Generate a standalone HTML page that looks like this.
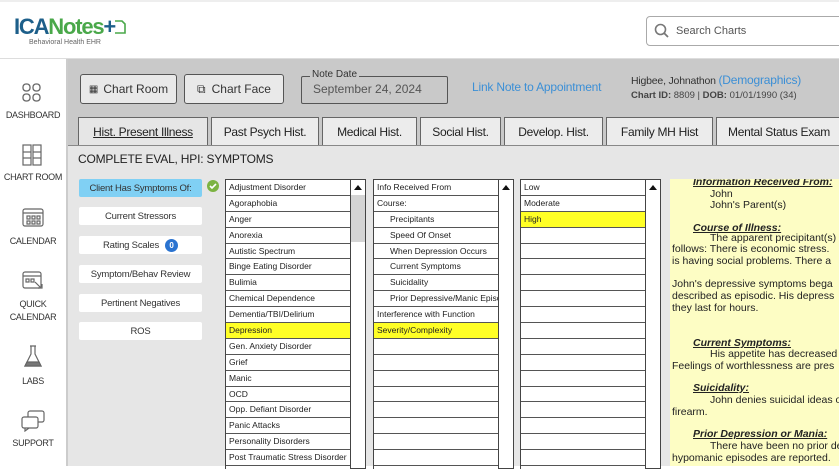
<!DOCTYPE html>
<html><head><style>
*{margin:0;padding:0;box-sizing:border-box}
body{width:839px;height:466px;overflow:hidden;position:relative;background:#fff;font-family:"Liberation Sans",sans-serif;color:#222}
.a{position:absolute}
.btn{position:absolute;border:1px solid #555;border-radius:3px;background:#e9e9e9;font-size:12px;color:#333;display:flex;align-items:center;justify-content:center}
.tab{position:absolute;top:117px;height:29px;border:1px solid #666;border-bottom:none;background:#ececec;font-size:12px;color:#222;display:flex;align-items:center;justify-content:center;white-space:nowrap;letter-spacing:-0.3px}
.lb{position:absolute;left:79px;width:123px;height:18px;background:#fff;border-radius:2px;font-size:9.5px;color:#333;display:flex;align-items:center;justify-content:center;letter-spacing:-0.2px}
.list{position:absolute;top:179px;background:#fff;border:1px solid #444;border-bottom:none;height:290px}
.list div{height:15.9px;border-bottom:1px solid #555;font-size:8.5px;padding-left:3px;line-height:15px;white-space:nowrap;overflow:hidden;color:#222}
.y{background:#ffff26}
.sb{position:absolute;top:179px;width:15px;height:290px;background:#fff;border:1px solid #444;border-left:none}
.sb:before{content:"";position:absolute;left:3px;top:5px;border-left:4px solid transparent;border-right:4px solid transparent;border-bottom:5px solid #111}
.t{position:absolute;font-size:10.5px;font-family:"Liberation Sans",sans-serif;color:#222;white-space:nowrap}
.h{font-style:italic;font-weight:bold;text-decoration:underline}
.side{position:absolute;left:0;width:66px;text-align:center;font-size:9px;color:#333;letter-spacing:-0.3px}
</style></head><body>
<div class="a" style="left:0;top:0;width:839px;height:2px;background:#eee"></div>
<div class="a" style="left:14px;top:14px;font-size:22px;font-weight:bold;letter-spacing:-1.2px;color:#1d5f8a">ICA<span style="color:#4aa84a">Notes</span><span style="color:#1d5f8a">+</span></div>
<svg class="a" style="left:113px;top:19px" width="14" height="16" fill="none" stroke="#4aa84a" stroke-width="1.6"><path d="M2 2 h7 l3 3 v9 h-10"/></svg>
<div class="a" style="left:29px;top:39px;font-size:7px;color:#666">Behavioral Health EHR</div>
<div class="a" style="left:646px;top:16px;width:200px;height:30px;border:1px solid #aaa;border-radius:4px"></div>
<svg class="a" style="left:654px;top:23px" width="16" height="16"><circle cx="6.5" cy="6.5" r="5" fill="none" stroke="#777" stroke-width="1.6"/><line x1="10" y1="10" x2="14" y2="14" stroke="#777" stroke-width="1.8"/></svg>
<div class="a" style="left:676px;top:25px;font-size:11px;color:#555">Search Charts</div>
<div class="a" style="left:0;top:58px;width:839px;height:1px;background:#ddd"></div>
<div class="a" style="left:66px;top:59px;width:2px;height:407px;background:#ccc"></div>
<svg class="a" style="left:22px;top:83px" width="20" height="20" fill="none" stroke="#666" stroke-width="1.3"><rect x="1" y="1" width="7" height="7" rx="3"/><rect x="11" y="1" width="7" height="7" rx="3"/><rect x="1" y="11" width="7" height="7" rx="3"/><rect x="11" y="11" width="7" height="7" rx="3"/></svg>
<div class="side" style="top:110px">DASHBOARD</div>
<svg class="a" style="left:22px;top:144px" width="20" height="22" fill="none" stroke="#666" stroke-width="1.2"><rect x="1" y="1" width="8" height="20"/><rect x="11" y="1" width="8" height="20"/><line x1="1" y1="8" x2="9" y2="8"/><line x1="1" y1="14" x2="9" y2="14"/><line x1="11" y1="8" x2="19" y2="8"/><line x1="11" y1="14" x2="19" y2="14"/></svg>
<div class="side" style="top:172px">CHART ROOM</div>
<svg class="a" style="left:22px;top:207px" width="22" height="20" fill="none" stroke="#666" stroke-width="1.2"><rect x="1" y="2" width="20" height="17" rx="2"/><line x1="1" y1="6" x2="21" y2="6"/><rect x="5" y="9" width="3" height="3"/><rect x="10" y="9" width="3" height="3"/><rect x="15" y="9" width="3" height="3"/><rect x="5" y="14" width="3" height="3"/><rect x="10" y="14" width="3" height="3"/><rect x="15" y="14" width="3" height="3"/></svg>
<div class="side" style="top:236px">CALENDAR</div>
<svg class="a" style="left:22px;top:270px" width="22" height="22" fill="none" stroke="#666" stroke-width="1.2"><rect x="1" y="2" width="18" height="16" rx="2"/><line x1="1" y1="6" x2="19" y2="6"/><rect x="4" y="9" width="3" height="3"/><rect x="9" y="9" width="3" height="3"/><path d="M13 12 l6 6 M16 18 h4 v-4"/></svg>
<div class="side" style="top:298px;line-height:13px">QUICK<br>CALENDAR</div>
<svg class="a" style="left:23px;top:345px" width="20" height="24" fill="none" stroke="#666" stroke-width="1.2"><path d="M7 1 h6 M8 1 v8 L2 21 h16 L12 9 V1"/><path d="M4 17 L16 17 L18 21 H2 Z" fill="#777"/></svg>
<div class="side" style="top:376px">LABS</div>
<svg class="a" style="left:20px;top:410px" width="26" height="22" fill="none" stroke="#666" stroke-width="1.2"><rect x="8" y="1" width="16" height="11" rx="2"/><rect x="2" y="7" width="16" height="11" rx="2" fill="#fff"/><path d="M5 18 v3 l4 -3"/></svg>
<div class="side" style="top:438px">SUPPORT</div>
<div class="a" style="left:68px;top:59px;width:771px;height:87px;background:#c9c9c9"></div>
<div class="btn" style="left:80px;top:74px;width:97px;height:30px"><span style="font-size:10px;margin-right:5px">▦</span>Chart Room</div>
<div class="btn" style="left:184px;top:74px;width:100px;height:30px"><span style="font-size:12px;margin-right:6px">⧉</span>Chart Face</div>
<div class="a" style="left:301px;top:76px;width:147px;height:28px;border:1px solid #555;border-radius:2px"></div>
<div class="a" style="left:310px;top:69px;font-size:10px;color:#333;background:#c9c9c9;padding:0 2px">Note Date</div>
<div class="a" style="left:313px;top:82px;font-size:12px;color:#555">September 24, 2024</div>
<div class="a" style="left:472px;top:80px;font-size:12px;color:#3b8fd6;letter-spacing:-0.2px">Link Note to Appointment</div>
<div class="a" style="left:631px;top:73px;font-size:10.5px;color:#333;letter-spacing:-0.2px">Higbee, Johnathon <span style="color:#3b8fd6;font-size:12px">(Demographics)</span></div>
<div class="a" style="left:631px;top:90px;font-size:9.5px;color:#444"><b>Chart ID:</b> 8809 | <b>DOB:</b> 01/01/1990 (34)</div>
<div class="tab" style="left:78px;width:130px;background:#e6e6e6"><u>Hist. Present Illness</u></div>
<div class="tab" style="left:211px;width:108px">Past Psych Hist.</div>
<div class="tab" style="left:322px;width:95px">Medical Hist.</div>
<div class="tab" style="left:420px;width:81px">Social Hist.</div>
<div class="tab" style="left:504px;width:99px">Develop. Hist.</div>
<div class="tab" style="left:606px;width:107px">Family MH Hist</div>
<div class="tab" style="left:716px;width:130px;justify-content:flex-start;padding-left:11px">Mental Status Exam</div>
<div class="a" style="left:68px;top:145px;width:771px;height:321px;background:#e6e6e6"></div>
<div class="a" style="left:68px;top:145px;width:771px;height:1px;background:#888"></div>
<div class="a" style="left:78px;top:152px;font-size:12px;color:#222;letter-spacing:-0.2px">COMPLETE EVAL, HPI: SYMPTOMS</div>
<div class="lb" style="top:179px;background:#80d0f4">Client Has Symptoms Of:</div>
<svg class="a" style="left:207px;top:180px" width="12" height="12"><circle cx="6" cy="6" r="6" fill="#7cb342"/><path d="M3 6 l2 2 l4 -4" stroke="#fff" stroke-width="1.6" fill="none"/></svg>
<div class="lb" style="top:207px">Current Stressors</div>
<div class="lb" style="top:236px">Rating Scales <span style="display:inline-block;width:13px;height:13px;border-radius:50%;background:#2a73d0;color:#fff;font-size:8px;line-height:13px;text-align:center;margin-left:6px;font-weight:bold">0</span></div>
<div class="lb" style="top:265px">Symptom/Behav Review</div>
<div class="lb" style="top:294px">Pertinent Negatives</div>
<div class="lb" style="top:322px">ROS</div>
<div class="list" style="left:225px;width:126px"><div>Adjustment Disorder</div><div>Agoraphobia</div><div>Anger</div><div>Anorexia</div><div>Autistic Spectrum</div><div>Binge Eating Disorder</div><div>Bulimia</div><div>Chemical Dependence</div><div>Dementia/TBI/Delirium</div><div class="y">Depression</div><div>Gen. Anxiety Disorder</div><div>Grief</div><div>Manic</div><div>OCD</div><div>Opp. Defiant Disorder</div><div>Panic Attacks</div><div>Personality Disorders</div><div>Post Traumatic Stress Disorder</div></div>
<div class="sb" style="left:351px"><div style="position:absolute;left:0;top:15px;width:14px;height:47px;background:#d4d4d4"></div></div>
<div class="list" style="left:373px;width:126px"><div>Info Received From</div><div>Course:</div><div style="padding-left:16px">Precipitants</div><div style="padding-left:16px">Speed Of Onset</div><div style="padding-left:16px">When Depression Occurs</div><div style="padding-left:16px">Current Symptoms</div><div style="padding-left:16px">Suicidality</div><div style="padding-left:16px">Prior Depressive/Manic Episodes</div><div>Interference with Function</div><div class="y">Severity/Complexity</div><div></div><div></div><div></div><div></div><div></div><div></div><div></div><div></div></div>
<div class="sb" style="left:499px"></div>
<div class="list" style="left:520px;width:126px"><div>Low</div><div>Moderate</div><div class="y">High</div><div></div><div></div><div></div><div></div><div></div><div></div><div></div><div></div><div></div><div></div><div></div><div></div><div></div><div></div><div></div></div>
<div class="sb" style="left:646px"></div>
<div class="a" style="left:670px;top:179px;width:169px;height:287px;background:#fdfdc4;overflow:hidden">
<div class="t h" style="left:23px;top:-3px">Information Received From:</div>
<div class="t" style="left:40px;top:9px">John</div>
<div class="t" style="left:40px;top:20px">John's Parent(s)</div>
<div class="t h" style="left:23px;top:43px">Course of Illness:</div>
<div class="t" style="left:40px;top:53px">The apparent precipitant(s)</div>
<div class="t" style="left:2px;top:64px">follows: There is economic stress.</div>
<div class="t" style="left:2px;top:76px">is having social problems. There a</div>
<div class="t" style="left:2px;top:99px">John's depressive symptoms bega</div>
<div class="t" style="left:2px;top:111px">described as episodic. His depress</div>
<div class="t" style="left:2px;top:123px">they last for hours.</div>
<div class="t h" style="left:23px;top:158px">Current Symptoms:</div>
<div class="t" style="left:40px;top:169px">His appetite has decreased</div>
<div class="t" style="left:2px;top:181px">Feelings of worthlessness are pres</div>
<div class="t h" style="left:23px;top:203px">Suicidality:</div>
<div class="t" style="left:40px;top:215px">John denies suicidal ideas o</div>
<div class="t" style="left:2px;top:227px">firearm.</div>
<div class="t h" style="left:23px;top:249px">Prior Depression or Mania:</div>
<div class="t" style="left:40px;top:261px">There have been no prior de</div>
<div class="t" style="left:2px;top:273px">hypomanic episodes are reported.</div>
</div>
</body></html>
